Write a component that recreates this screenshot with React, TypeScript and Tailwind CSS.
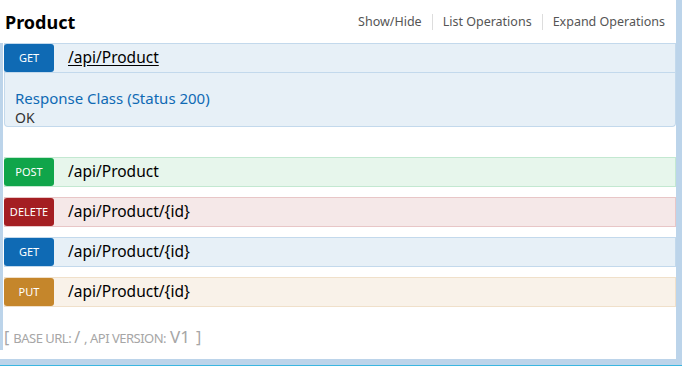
import React from "react";

const font = { fontFamily: '"Noto Sans", "Open Sans", sans-serif' };

type Op = { method: string; path: string; badge: string; bg: string; border: string };

const ops: Op[] = [
  { method: "POST", path: "/api/Product", badge: "bg-[#10a54a]", bg: "bg-[#e7f6ec]", border: "border-[#c3e8d1]" },
  { method: "DELETE", path: "/api/Product/{id}", badge: "bg-[#a41e22]", bg: "bg-[#f5e8e8]", border: "border-[#e8c6c7]" },
  { method: "GET", path: "/api/Product/{id}", badge: "bg-[#0f6ab4]", bg: "bg-[#e7f0f7]", border: "border-[#c3d9ec]" },
  { method: "PUT", path: "/api/Product/{id}", badge: "bg-[#c5862b]", bg: "bg-[#f9f2e9]", border: "border-[#f0e0ca]" },
];

function Row({ op, underline }: { op: Op; underline?: boolean }) {
  return (
    <div className={`flex h-[30px] items-center border ${op.border} ${op.bg}`}>
      <div
        className={`ml-[-1px] flex h-[28px] w-[50px] items-center justify-center rounded-[3px] text-[11px] text-white ${op.badge}`}
      >
        {op.method}
      </div>
      <div className={`ml-[14px] text-[15.5px] text-black ${underline ? "underline underline-offset-2" : ""}`}>
        {op.path}
      </div>
    </div>
  );
}

export default function App() {
  return (
    <div style={font} className="relative h-[366px] w-[682px] overflow-hidden bg-[#bcd4ea]">
      <div className="h-[359px] w-[676px] bg-white">
        {/* header */}
        <div className="flex h-[43px] items-center justify-between pl-[5px] pr-[11px] pt-[1px]">
          <div className="text-[18px] font-bold text-black">Product</div>
          <div className="flex items-center text-[12.5px] text-[#555]">
            <span>Show/Hide</span>
            <span className="mx-[10px] h-[16px] w-px bg-[#ddd]" />
            <span>List Operations</span>
            <span className="mx-[10px] h-[16px] w-px bg-[#ddd]" />
            <span>Expand Operations</span>
          </div>
        </div>
        <div className="border-l-[3px] border-[#bcd4ea] pl-[1px]">
          <Row op={{ method: "GET", path: "/api/Product", badge: "bg-[#0f6ab4]", bg: "bg-[#e7f0f7]", border: "border-[#c3d9ec]" }} underline />
          <div className="h-[54px] rounded-b-[4px] border border-t-0 border-[#c3d9ec] bg-[#e7f0f7] pl-[10px] pt-[15px]">
            <div className="text-[15px] leading-[20px] text-[#0f6ab4]">Response Class (Status 200)</div>
            <div className="mt-[1px] text-[14px] leading-[18px] text-[#333]">OK</div>
          </div>
          <div className="mt-[30px] flex flex-col gap-[10px]">
            {ops.map((op, i) => (
              <Row key={i} op={op} />
            ))}
          </div>
          <div className="mt-[17px] flex items-baseline text-[#a6a6a6]">
            <span className="text-[16px]">[</span>
            <span className="ml-[4px] text-[13px] tracking-[-0.5px]">BASE URL:</span>
            <span className="ml-[3px] text-[16px]">/</span>
            <span className="ml-[4px] text-[13px] tracking-[-0.5px]">, API VERSION:</span>
            <span className="ml-[4px] text-[17px]">V1</span>
            <span className="ml-[6px] text-[16px]">]</span>
          </div>
        </div>
      </div>
      <div className="absolute bottom-0 left-0 h-px w-full bg-[#3bb6e0]" />
    </div>
  );
}
